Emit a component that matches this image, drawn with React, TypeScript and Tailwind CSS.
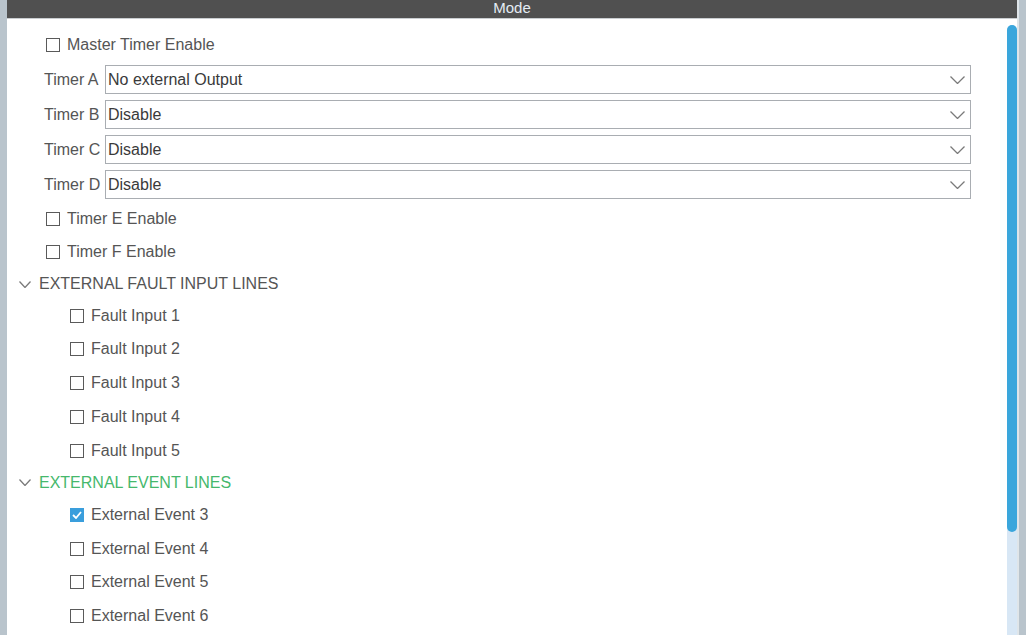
import React from "react";

type Row =
  | { kind: "check"; label: string; checked?: boolean; indent?: boolean; h: string }
  | { kind: "select"; label: string; value: string; h: string }
  | { kind: "section"; label: string; active?: boolean; h: string };

const rows: Row[] = [
  { kind: "check", label: "Master Timer Enable", h: "h-[35px]" },
  { kind: "select", label: "Timer A", value: "No external Output", h: "h-[35px]" },
  { kind: "select", label: "Timer B", value: "Disable", h: "h-[35px]" },
  { kind: "select", label: "Timer C", value: "Disable", h: "h-[35px]" },
  { kind: "select", label: "Timer D", value: "Disable", h: "h-[35px]" },
  { kind: "check", label: "Timer E Enable", h: "h-[33px]" },
  { kind: "check", label: "Timer F Enable", h: "h-[33px]" },
  { kind: "section", label: "EXTERNAL FAULT INPUT LINES", h: "h-[32px]" },
  { kind: "check", label: "Fault Input 1", indent: true, h: "h-[32px]" },
  { kind: "check", label: "Fault Input 2", indent: true, h: "h-[34px]" },
  { kind: "check", label: "Fault Input 3", indent: true, h: "h-[34px]" },
  { kind: "check", label: "Fault Input 4", indent: true, h: "h-[34px]" },
  { kind: "check", label: "Fault Input 5", indent: true, h: "h-[33px]" },
  { kind: "section", label: "EXTERNAL EVENT LINES", active: true, h: "h-[31px]" },
  { kind: "check", label: "External Event 3", indent: true, checked: true, h: "h-[34px]" },
  { kind: "check", label: "External Event 4", indent: true, h: "h-[33px]" },
  { kind: "check", label: "External Event 5", indent: true, h: "h-[34px]" },
  { kind: "check", label: "External Event 6", indent: true, h: "h-[33px]" },
];

const Checkbox = ({ checked }: { checked?: boolean }) =>
  checked ? (
    <span className="flex h-[14px] w-[14px] items-center justify-center bg-[#3a9edc]">
      <svg width="10" height="8" viewBox="0 0 10 8">
        <polyline points="1,4 4,7 9,1" fill="none" stroke="#fff" strokeWidth="1.8" />
      </svg>
    </span>
  ) : (
    <span className="h-[14px] w-[14px] border border-[#5a5a5a] bg-white" />
  );

const Chevron = ({ w, h, color }: { w: number; h: number; color: string }) => (
  <svg width={w} height={h} viewBox={`0 0 ${w} ${h}`}>
    <polyline points={`0.5,0.5 ${w / 2},${h - 0.5} ${w - 0.5},0.5`} fill="none" stroke={color} strokeWidth="1.3" />
  </svg>
);

const RowView = ({ row }: { row: Row }) => {
  if (row.kind === "check") {
    return (
      <div className={`flex items-center ${row.h} ${row.indent ? "pl-[63px]" : "pl-[39px]"}`}>
        <Checkbox checked={row.checked} />
        <span className="ml-[7px] text-[16px] text-[#555]">{row.label}</span>
      </div>
    );
  }
  if (row.kind === "select") {
    return (
      <div className={`flex items-center ${row.h} pl-[37px] pr-[36px]`}>
        <span className="w-[61px] text-[16px] text-[#555]">{row.label}</span>
        <div className="flex h-[29px] flex-1 items-center justify-between border border-[#a9adb2] bg-white pl-[2px] pr-[5px]">
          <span className="text-[16px] text-[#3a3a3a]">{row.value}</span>
          <Chevron w={15} h={8} color="#7a7a7a" />
        </div>
      </div>
    );
  }
  return (
    <div className={`flex items-center ${row.h} pl-[12px]`}>
      <Chevron w={12} h={7} color="#7a7a7a" />
      <span className={`ml-[8px] text-[16px] ${row.active ? "text-[#45b86c]" : "text-[#555]"}`}>{row.label}</span>
    </div>
  );
};

export default function App() {
  return (
    <div className="flex h-[635px] w-[1026px] overflow-hidden bg-[#b9c4cc] font-['Liberation_Sans',Arial,sans-serif]">
      <div className="w-[7px] shrink-0" />
      <div className="flex w-[1010px] flex-col">
        <div className="flex h-[18px] shrink-0 items-start justify-center bg-[#505050] text-[15px] leading-[15px] text-[#e4ecf4]">
          Mode
        </div>
        <div className="h-px shrink-0 bg-[#c9cdd0]" />
        <div className="flex flex-1 bg-white">
          <div className="flex-1 pt-[8px]">
            {rows.map((row, i) => (
              <RowView key={i} row={row} />
            ))}
          </div>
          <div className="flex w-[10px] flex-col pt-[6px]">
            <div className="flex flex-1 flex-col rounded-t-full bg-[#d8e7f5]">
              <div className="h-[507px] rounded-full bg-[#3aa6dc]" />
            </div>
          </div>
        </div>
      </div>
      <div className="w-[2px] shrink-0 bg-[#dfe5e9]" />
    </div>
  );
}
